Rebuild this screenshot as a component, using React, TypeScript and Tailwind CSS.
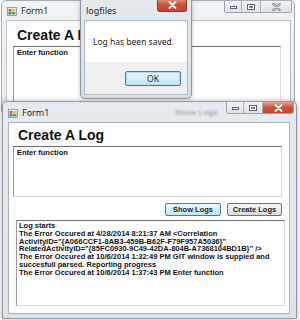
import React from "react";

const ui = { fontFamily: '"Noto Sans", "Open Sans", sans-serif' };
const ar = { fontFamily: '"Liberation Sans", Arial, sans-serif' };

function FormIcon() {
  return (
    <svg width="10" height="9" viewBox="0 0 10 9">
      <rect x="0.5" y="0.5" width="9" height="8" fill="#f4f4f4" stroke="#8a8a8a" strokeWidth="0.8" />
      <rect x="1.5" y="2" width="3" height="2.5" fill="#e0443a" />
      <rect x="5" y="2" width="3.5" height="2.5" fill="#f2c230" />
      <rect x="1.5" y="5" width="3" height="2.5" fill="#3a78d8" />
      <rect x="5" y="5" width="3.5" height="2.5" fill="#4aa84a" />
    </svg>
  );
}

function CaptionButtons({ active }: { active: boolean }) {
  return (
    <div className="flex h-[12px] rounded-b-[3px] border border-t-0 border-[#9aa4ae] overflow-hidden">
      <div className="w-[17px] flex items-end justify-center pb-[3px] bg-gradient-to-b from-[#f3f5f7] to-[#dde2e7] border-r border-[#a9b2bb]">
        <div className="w-[7px] h-[3px] border border-[#5b636b] bg-white" />
      </div>
      <div className="w-[19px] flex items-center justify-center bg-gradient-to-b from-[#f3f5f7] to-[#dde2e7] border-r border-[#a9b2bb]">
        <div className="w-[8px] h-[6px] border border-[#5b636b] bg-white flex items-center justify-center">
          <div className="w-[4px] h-[2px] border border-[#7a828a]" />
        </div>
      </div>
      <div
        className={
          active
            ? "w-[30px] flex items-center justify-center bg-gradient-to-b from-[#e6a292] via-[#c9533f] to-[#c8402d]"
            : "w-[30px] flex items-center justify-center bg-gradient-to-b from-[#f3f5f7] to-[#dde2e7]"
        }
      >
        <svg width="9" height="8" viewBox="0 0 9 8">
          {active ? (
            <path d="M1.5 1 L7.5 7 M7.5 1 L1.5 7" stroke="#ffffff" strokeWidth="1.8" strokeLinecap="round" />
          ) : (
            <>
              <path d="M1.5 1 L7.5 7 M7.5 1 L1.5 7" stroke="#6d757d" strokeWidth="2.4" strokeLinecap="round" />
              <path d="M1.5 1 L7.5 7 M7.5 1 L1.5 7" stroke="#ffffff" strokeWidth="1" strokeLinecap="round" />
            </>
          )}
        </svg>
      </div>
    </div>
  );
}

function DialogClose() {
  return (
    <div className="w-[30px] h-[14px] rounded-b-[3px] border border-t-0 border-[#8d3a2f] flex items-center justify-center bg-gradient-to-b from-[#e6a292] via-[#c9533f] to-[#c8402d]">
      <svg width="9" height="8" viewBox="0 0 9 8">
        <path d="M1.5 1 L7.5 7 M7.5 1 L1.5 7" stroke="#ffffff" strokeWidth="1.8" strokeLinecap="round" />
      </svg>
    </div>
  );
}

const sunken = "border border-t-[#6e6e6e] border-l-[#9a9a9a] border-r-[#d9d9d9] border-b-[#d9d9d9] bg-white";

export default function App() {
  const logLines = [
    "Log starts",
    "The Error Occured at 4/28/2014 8:21:37 AM  <Correlation",
    'ActivityID="{A066CCF1-8AB3-459B-B62F-F79F957A5036}"',
    'RelatedActivityID="{85FC0930-9C49-42DA-804B-A7368104BD1B}" />',
    "The Error Occured at 10/6/2014 1:32:49 PM GIT window is suppied and",
    "succesfull parsed. Reporting progress",
    "The Error Occured at 10/6/2014 1:37:43 PM  Enter function",
  ];

  return (
    <div className="relative w-[300px] h-[320px] overflow-hidden bg-white">
      {/* Back window (inactive) */}
      <div className="absolute left-[1px] top-0 w-[294px] h-[112px] rounded-t-[5px] border border-[#a3acb5] bg-gradient-to-b from-[#f1f3f5] to-[#e9ecef] flex flex-col">
        <div className="h-[19px] flex items-start">
          <div className="flex items-center gap-[4px] pl-[5px] pt-[5px]">
            <FormIcon />
            <span style={ui} className="text-[9px] leading-[10px] text-[#1e1e1e]">Form1</span>
          </div>
          <div className="ml-auto mr-[2px]">
            <CaptionButtons active={false} />
          </div>
        </div>
        <div className="flex-1 ml-[4px] mr-[3px] border border-[#b9c1c9] bg-white flex flex-col">
          <div style={ar} className="pl-[10px] pt-[6px] text-[14px] leading-[16px] font-bold text-[#111]">Create A Log</div>
          <div className={"ml-[6px] mt-[3px] w-[268px] h-[60px] " + sunken}>
            <div style={ar} className="pl-[3px] pt-[1px] text-[7.5px] leading-[9px] font-bold text-[#111]">Enter function</div>
          </div>
        </div>
      </div>

      {/* Dialog logfiles */}
      <div className="absolute left-[80px] top-[-3px] w-[112px] h-[102px] rounded-[5px] border border-[#8e99a4] bg-gradient-to-b from-[#e4e9ee] to-[#dbe1e7] flex flex-col shadow-[0_0_4px_rgba(0,0,0,0.25)]">
        <div className="h-[22px] flex items-start">
          <span style={ui} className="pl-[5px] pt-[8px] text-[9px] leading-[10px] text-[#1e1e1e]">logfiles</span>
          <div className="ml-auto mr-[4px]">
            <DialogClose />
          </div>
        </div>
        <div className="flex-1 mx-[3px] mb-[3px] border border-[#b3bcc5] flex flex-col">
          <div className="h-[41px] bg-white flex items-center">
            <span style={ui} className="pl-[8px] text-[8.5px] leading-[10px] text-[#1e1e1e]">Log has been saved.</span>
          </div>
          <div className="flex-1 bg-[#f0f0f0] flex items-start justify-end pt-[9px] pr-[6px]">
            <div className="w-[56px] h-[15px] rounded-[2px] border border-[#3c7fb1] bg-gradient-to-b from-[#eaf6fd] via-[#d9f0fc] to-[#bee6fd] flex items-center justify-center shadow-[inset_0_0_0_1px_#a9dcf6]">
              <span style={ui} className="text-[8.5px] leading-[10px] text-[#1e1e1e]">OK</span>
            </div>
          </div>
        </div>
      </div>

      {/* Front window (active) */}
      <div className="absolute left-[2px] top-[101px] w-[295px] h-[218px] rounded-t-[5px] border border-[#8e99a4] bg-gradient-to-b from-[#e6ebf0] to-[#dde3e9] flex flex-col shadow-[0_0_5px_rgba(0,0,0,0.3)]">
        <div className="relative h-[20px] flex items-start">
          <div className="flex items-center gap-[4px] pl-[5px] pt-[6px]">
            <FormIcon />
            <span style={ui} className="text-[9px] leading-[10px] text-[#1e1e1e]">Form1</span>
          </div>
          <span style={ar} className="absolute left-[172px] top-[5px] text-[8px] font-bold text-[#777] blur-[1.2px] opacity-60">Show Logs</span>
          <div className="ml-auto mr-[2px]">
            <CaptionButtons active={true} />
          </div>
        </div>
        <div className="flex-1 ml-[5px] mr-[6px] mb-[4px] border border-[#a9b3bd] bg-white flex flex-col">
          <div style={ar} className="pl-[9px] pt-[4px] text-[14px] leading-[16px] font-bold text-[#111]">Create A Log</div>
          <div className={"ml-[4px] mt-[3px] w-[269px] h-[51px] " + sunken}>
            <div style={ar} className="pl-[3px] pt-[1px] text-[7.5px] leading-[9px] font-bold text-[#111]">Enter function</div>
          </div>
          <div className="flex justify-end gap-[6px] mr-[7px] mt-[6px]">
            <div className="w-[56px] h-[13px] rounded-[2px] border border-[#3c7fb1] bg-gradient-to-b from-[#eaf6fd] via-[#d9f0fc] to-[#bee6fd] flex items-center justify-center">
              <span style={ar} className="text-[7.5px] leading-[9px] font-bold text-[#222]">Show Logs</span>
            </div>
            <div className="w-[55px] h-[13px] rounded-[2px] border border-[#707070] bg-gradient-to-b from-[#f4f4f4] via-[#ebebeb] to-[#d9d9d9] flex items-center justify-center">
              <span style={ar} className="text-[7.5px] leading-[9px] font-bold text-[#222]">Create Logs</span>
            </div>
          </div>
          <div className={"ml-[7px] mt-[4px] w-[269px] h-[86px] " + sunken}>
            <div style={ar} className="pl-[2px] pt-[1px] text-[7.5px] leading-[7.8px] font-bold text-[#111] whitespace-nowrap">
              {logLines.map((l, i) => (
                <div key={i}>{l}</div>
              ))}
            </div>
          </div>
        </div>
      </div>
    </div>
  );
}
